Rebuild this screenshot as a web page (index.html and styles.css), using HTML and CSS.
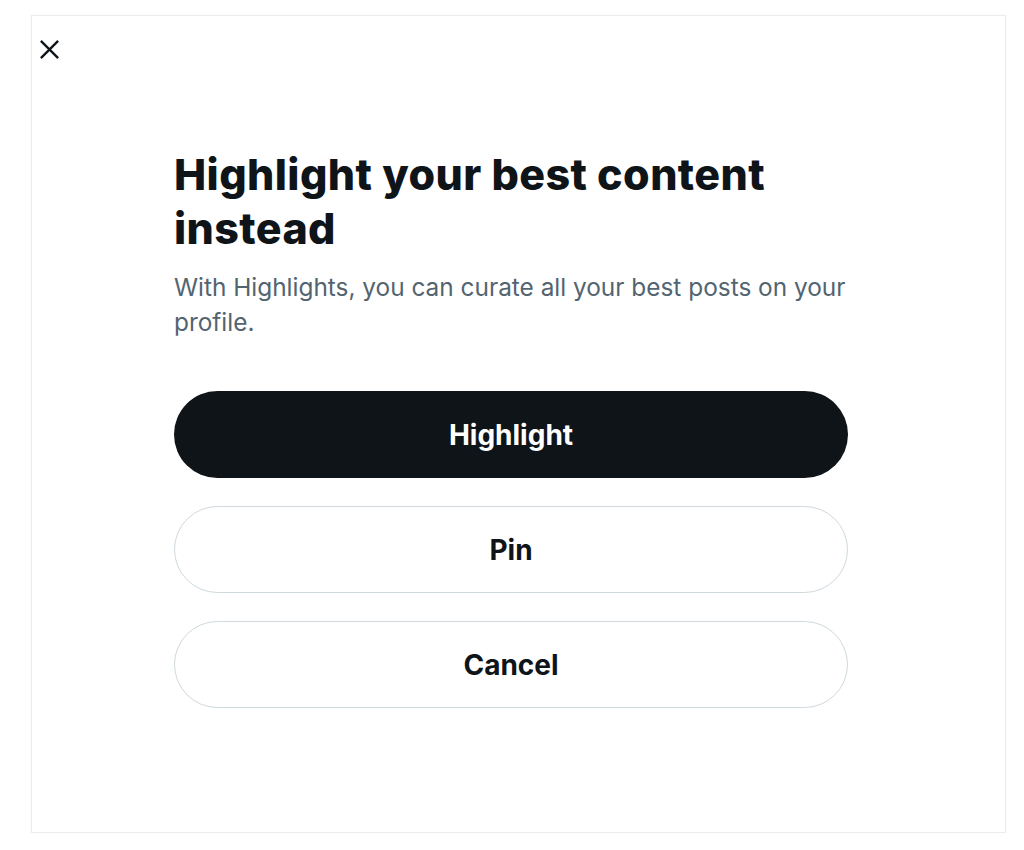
FILE: index.html
```html
<!DOCTYPE html>
<html>
<head>
<meta charset="utf-8">
<link rel="stylesheet" href="styles.css">
</head>
<body>
<div class="dialog">
  <div class="header">
    <button class="close" aria-label="Close">
      <svg viewBox="0 0 24 24" width="24" height="24"><path d="M3 3 L21 21 M21 3 L3 21" stroke="#0f1419" stroke-width="2.4" fill="none"/></svg>
    </button>
  </div>
  <div class="content">
    <h1 class="title">Highlight your best content instead</h1>
    <p class="subtitle">With Highlights, you can curate all your best posts on your profile.</p>
    <div class="actions">
      <button class="btn btn-primary">Highlight</button>
      <button class="btn btn-outline">Pin</button>
      <button class="btn btn-outline">Cancel</button>
    </div>
  </div>
</div>
</body>
</html>
```

FILE: styles.css
```css
html, body {
  margin: 0;
  padding: 0;
  background: #ffffff;
}
body {
  font-family: Inter, "Noto Sans", sans-serif;
  color: #0f1419;
}
.dialog {
  box-sizing: border-box;
  margin: 15px 0 0 31px;
  width: 975px;
  height: 818px;
  border: 1.5px solid #ececec;
  box-shadow: 0 0 3px rgba(0,0,0,0.04);
  background: #fff;
}
.header {
  padding: 20px 0 0 4px;
  height: 28px;
}
.close {
  border: 0;
  background: none;
  padding: 0;
  width: 26px;
  height: 26px;
  display: flex;
  align-items: center;
  justify-content: center;
  cursor: pointer;
}
.close svg {
  width: 23px;
  height: 23px;
}
.content {
  width: 674px;
  margin-left: 142px;
  padding-top: 83px;
}
.title {
  margin: 0;
  font-size: 43px;
  line-height: 54px;
  font-weight: 800;
  letter-spacing: 0.4px;
  color: #0f1419;
}
.subtitle {
  margin: 15px 0 0 0;
  font-size: 24.4px;
  line-height: 35px;
  color: #536471;
  font-weight: 400;
}
.actions {
  margin-top: 51px;
  display: flex;
  flex-direction: column;
  gap: 28px;
}
.btn {
  box-sizing: border-box;
  height: 87px;
  width: 100%;
  border-radius: 9999px;
  font-family: Inter, "Noto Sans", sans-serif;
  font-size: 28px;
  font-weight: 700;
  cursor: pointer;
}
.btn-primary {
  background: #0f1419;
  color: #ffffff;
  border: 0;
}
.btn-outline {
  background: #ffffff;
  color: #0f1419;
  border: 1.5px solid #cfd9de;
}
```
